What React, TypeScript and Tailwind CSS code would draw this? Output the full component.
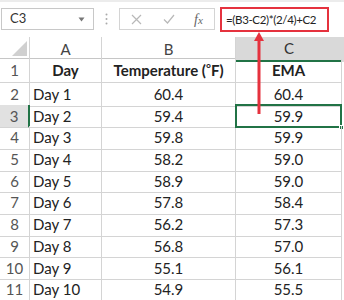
import React from "react";

const rows: [string, string, string][] = [
  ["Day 1", "60.4", "60.4"],
  ["Day 2", "59.4", "59.9"],
  ["Day 3", "59.8", "59.9"],
  ["Day 4", "58.2", "59.0"],
  ["Day 5", "58.9", "59.0"],
  ["Day 6", "57.8", "58.4"],
  ["Day 7", "56.2", "57.3"],
  ["Day 8", "56.8", "57.0"],
  ["Day 9", "55.1", "56.1"],
  ["Day 10", "54.9", "55.5"],
];

const grid = "grid grid-cols-[30px_72px_134px_106px_2px]";

export default function App() {
  return (
    <div
      className="relative w-[344px] h-[300px] overflow-hidden bg-white text-[#222]"
      style={{ fontFamily: "Lato, 'Open Sans', sans-serif" }}
    >
      {/* formula bar */}
      <div className="h-[37px] border-t-[2px] border-[#ececec] flex items-start pt-[6px]">
        <div className="ml-[1px] w-[93px] h-[22px] border border-[#c8c8c8] flex items-center justify-between pl-[8px] pr-[8px] text-[13px] text-[#333]">
          <span>C3</span>
          <svg width="7" height="5" viewBox="0 0 7 5">
            <path d="M0.5 0.5 L6.5 0.5 L3.5 4.5 Z" fill="#777" />
          </svg>
        </div>
        <div className="w-[25px] h-[22px] flex items-center justify-center">
          <svg width="3" height="12" viewBox="0 0 3 12">
            <circle cx="1.5" cy="1.5" r="1" fill="#aaa" />
            <circle cx="1.5" cy="6" r="1" fill="#aaa" />
            <circle cx="1.5" cy="10.5" r="1" fill="#aaa" />
          </svg>
        </div>
        <div className="w-[96px] h-[22px] border border-[#d4d4d4] flex items-center">
          <svg className="ml-[11px]" width="11" height="11" viewBox="0 0 11 11">
            <path d="M1 1 L10 10 M10 1 L1 10" stroke="#b8b8b8" strokeWidth="1.2" />
          </svg>
          <svg className="ml-[21px]" width="12" height="10" viewBox="0 0 12 10">
            <path d="M1 5.5 L4.5 9 L11 1" stroke="#b8b8b8" strokeWidth="1.2" fill="none" />
          </svg>
          <span
            className="ml-[19px] text-[14px] italic text-[#666]"
            style={{ fontFamily: "'Liberation Serif', serif" }}
          >
            f<span className="text-[11px]">x</span>
          </span>
        </div>
        <div className="ml-[5px] -mt-[1px] w-[109px] h-[25px] border-2 border-[#e5323e] flex items-center pl-[4px] text-[11.5px] text-[#222] whitespace-nowrap tracking-[-0.35px] overflow-hidden">
          =(B3-C2)*(2/4)+C2
        </div>
      </div>

      {/* column header row */}
      <div className={`${grid} h-[22px] border-b border-[#c6c6c6] text-[15px] text-[#444]`}>
        <div className="relative border-r border-[#d4d4d4]">
          <svg className="absolute left-[12px] top-[4px]" width="16" height="15" viewBox="0 0 16 15">
            <path d="M15 0 L15 15 L0 15 Z" fill="#d0d0d0" />
          </svg>
        </div>
        <div className="border-r border-[#d4d4d4] flex items-center justify-center">A</div>
        <div className="border-r border-[#d4d4d4] flex items-center justify-center">B</div>
        <div className="bg-[#d9d9d9] border-b-2 border-[#217346] flex items-center justify-center text-[#333]">C</div>
        <div className="bg-[#d9d9d9]" />
      </div>

      {/* header data row */}
      <div className={`${grid} h-[24px] text-[15px]`}>
        <div className="border-r border-b border-[#d4d4d4] flex items-center justify-center text-[#555]">1</div>
        <div className="border-r border-b border-[#d4d4d4] flex items-center justify-center font-bold">Day</div>
        <div className="border-r border-b border-[#d4d4d4] flex items-center justify-center font-bold whitespace-nowrap">
          Temperature (<span className="relative -top-[3px] text-[12px]">°</span>F)
        </div>
        <div className="border-r border-b border-[#d4d4d4] flex items-center justify-center font-bold">EMA</div>
        <div />
      </div>

      {rows.map(([d, t, e], i) => {
        const sel = i === 1;
        return (
          <div key={d} className={`${grid} h-[21.7px] text-[15px]`}>
            <div
              className={`border-b border-[#d4d4d4] flex items-center justify-center text-[#555] ${
                sel ? "bg-[#e1e1e1] border-r-2 border-r-[#217346]" : "border-r"
              }`}
            >
              {i + 2}
            </div>
            <div className="border-r border-b border-[#d4d4d4] flex items-center pl-[3px]">{d}</div>
            <div className="border-r border-b border-[#d4d4d4] flex items-center justify-center">{t}</div>
            <div className="relative border-r border-b border-[#d4d4d4] flex items-center justify-center">
              {e}
              {sel && (
                <>
                  <div className="absolute -left-[1px] -top-[1px] -right-[1px] -bottom-[1px] border-2 border-[#217346]" />
                  <div className="absolute -right-[3px] -bottom-[3px] w-[5px] h-[5px] bg-[#217346] border border-white" />
                </>
              )}
            </div>
            <div />
          </div>
        );
      })}

      {/* red arrow */}
      <svg className="absolute left-[252px] top-[32px]" width="14" height="84" viewBox="0 0 14 84">
        <path d="M7 0 L12 9 L2 9 Z" fill="#e5323e" />
        <rect x="5.5" y="8" width="3" height="74" fill="#e5323e" />
      </svg>
    </div>
  );
}
